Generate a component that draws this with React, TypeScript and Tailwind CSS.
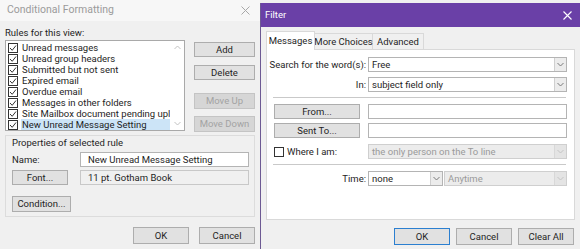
import React from "react";

const Check = ({ checked = true }: { checked?: boolean }) => (
  <span className="w-[10px] h-[10px] border border-[#333333] bg-white flex items-center justify-center shrink-0">
    {checked && (
      <svg width="8" height="8" viewBox="0 0 8 8">
        <path d="M1 4 L3.2 6.3 L7 1.5" fill="none" stroke="#333333" strokeWidth="1" />
      </svg>
    )}
  </span>
);

const Chev = ({ up = false, color = "#777777" }: { up?: boolean; color?: string }) => (
  <svg width="7" height="5" viewBox="0 0 7 5">
    <path d={up ? "M0.5 4 L3.5 1 L6.5 4" : "M0.5 1 L3.5 4 L6.5 1"} fill="none" stroke={color} strokeWidth="1" />
  </svg>
);

const Btn = ({ label, w, h = 15, disabled = false, focused = false }: { label: string; w: number; h?: number; disabled?: boolean; focused?: boolean }) => (
  <div
    className={
      "flex items-center justify-center border text-[9.5px] leading-none whitespace-nowrap shrink-0 " +
      (disabled
        ? "bg-[#d6d6d6] border-[#c4c4c4] text-[#a3a3a3]"
        : focused
        ? "bg-[#e1e1e1] border-[#2b7fd0] text-[#1e1e1e]"
        : "bg-[#e1e1e1] border-[#adadad] text-[#1e1e1e]")
    }
    style={{ width: w, height: h }}
  >
    {label}
  </div>
);

const Combo = ({ text, w, disabled = false }: { text: string; w: number; disabled?: boolean }) => (
  <div
    className={
      "h-[15px] flex items-stretch border shrink-0 " +
      (disabled ? "bg-[#ececec] border-[#cfcfcf] text-[#9a9a9a]" : "bg-white border-[#b4b4b4] text-[#1e1e1e]")
    }
    style={{ width: w }}
  >
    <div className="flex-1 flex items-center pl-[3px] text-[9.5px] leading-none overflow-hidden whitespace-nowrap">{text}</div>
    <div
      className={
        "w-[12px] flex items-center justify-center border-l " +
        (disabled ? "bg-[#e4e4e4] border-[#d8d8d8]" : "bg-[#ececec] border-[#cfcfcf]")
      }
    >
      <Chev color={disabled ? "#c4c4c4" : "#7a7a7a"} />
    </div>
  </div>
);

const Input = ({ text = "", w, gray = false }: { text?: string; w: number; gray?: boolean }) => (
  <div
    className={
      "h-[15px] flex items-center border pl-[7px] text-[9.5px] leading-none text-[#1e1e1e] whitespace-nowrap shrink-0 " +
      (gray ? "bg-[#f0f0f0] border-[#c8c8c8]" : "bg-white border-[#b4b4b4]")
    }
    style={{ width: w }}
  >
    {text}
  </div>
);

const rules = [
  "Unread messages",
  "Unread group headers",
  "Submitted but not sent",
  "Expired email",
  "Overdue email",
  "Messages in other folders",
  "Site Mailbox document pending upload",
  "New Unread Message Setting",
];

export default function App() {
  return (
    <div className="flex w-[580px] h-[249px] overflow-hidden bg-[#f0f0f0] text-[#1e1e1e] font-['Roboto','Noto_Sans',sans-serif]">
      {/* Conditional Formatting dialog */}
      <div className="w-[260px] h-full flex flex-col shrink-0 bg-[#f0f0f0]">
        <div className="h-[21px] flex items-center justify-between pl-[7px] pr-[10px] bg-[#f7f7f7]">
          <span className="text-[10.5px] leading-none text-[#9b9b9b]">Conditional Formatting</span>
          <svg width="9" height="9" viewBox="0 0 9 9">
            <path d="M0.5 0.5 L8.5 8.5 M8.5 0.5 L0.5 8.5" stroke="#a8a8a8" strokeWidth="1" />
          </svg>
        </div>
        <div className="mt-[6px] h-[12px] leading-[12px] pl-[5px] text-[9.5px]">Rules for this view:</div>
        <div className="flex mt-px">
          <div className="ml-[5px] w-[180px] h-[91px] bg-white border border-[#a9a9a9] flex">
            <div className="flex-1 flex flex-col pt-px overflow-hidden">
              {rules.map((r, i) => (
                <div key={r} className="h-[11px] flex items-center pl-[2px] shrink-0">
                  <Check />
                  <span
                    className={
                      "ml-[3px] h-[11px] flex items-center pl-px text-[9.5px] leading-none whitespace-nowrap overflow-hidden " +
                      (i === 7 ? "bg-[#cce4f7] w-[152px]" : "w-[152px]")
                    }
                  >
                    {r}
                  </span>
                </div>
              ))}
            </div>
            <div className="w-[14px] flex flex-col items-center justify-between py-[4px]">
              <Chev up color="#c2c2c2" />
              <Chev color="#c2c2c2" />
            </div>
          </div>
          <div className="ml-[9px] flex flex-col">
            <div className="mt-[2px]"><Btn label="Add" w={61} /></div>
            <div className="mt-[8px]"><Btn label="Delete" w={61} /></div>
            <div className="mt-[13px]"><Btn label="Move Up" w={61} h={16} disabled /></div>
            <div className="mt-[7px]"><Btn label="Move Down" w={61} h={16} disabled /></div>
          </div>
        </div>
        <div className="mt-[3px] ml-[5px] w-[250px] h-[82px] border border-[#dcdcdc] flex flex-col">
          <div className="mt-px h-[11px] leading-[11px] pl-[6px] text-[9.5px]">Properties of selected rule</div>
          <div className="mt-[4px] flex items-center">
            <span className="pl-[6px] w-[74px] text-[9.5px] leading-none">Name:</span>
            <Input text="New Unread Message Setting" w={169} />
          </div>
          <div className="mt-[3px] flex items-center">
            <div className="ml-[6px]"><Btn label="Font..." w={56} /></div>
            <div className="ml-[12px]"><Input text="11 pt. Gotham Book" w={169} gray /></div>
          </div>
          <div className="mt-[11px] ml-[6px]">
            <Btn label="Condition..." w={59} h={16} />
          </div>
        </div>
        <div className="mt-[10px] flex justify-end gap-[10px] pr-[5px]">
          <Btn label="OK" w={56} h={17} />
          <Btn label="Cancel" w={56} h={17} />
        </div>
      </div>

      {/* Filter dialog */}
      <div className="w-[320px] mt-[3px] h-[246px] flex flex-col border-l border-[#6d5a93] bg-[#f0f0f0] shrink-0">
        <div className="h-[24px] bg-[#6a40a7] flex items-center justify-between pl-[4px] pr-[8px]">
          <span className="text-[9.5px] leading-none text-white">Filter</span>
          <svg width="9" height="9" viewBox="0 0 9 9">
            <path d="M0.5 0.5 L8.5 8.5 M8.5 0.5 L0.5 8.5" stroke="#ffffff" strokeWidth="1.1" />
          </svg>
        </div>
        <div className="mt-[4px] pl-[5px] flex items-end h-[18px]">
          <div className="relative z-10 -mb-px w-[49px] h-[19px] bg-white border border-b-0 border-[#d9d9d9] flex items-center justify-center text-[9.5px] leading-none whitespace-nowrap">
            Messages
          </div>
          <div className="w-[58px] h-[16px] border border-l-0 border-b-0 border-[#d9d9d9] flex items-center justify-center text-[9.5px] leading-none whitespace-nowrap">
            More Choices
          </div>
          <div className="w-[51px] h-[16px] border border-l-0 border-b-0 border-[#d9d9d9] flex items-center justify-center text-[9.5px] leading-none whitespace-nowrap">
            Advanced
          </div>
        </div>
        <div className="ml-[5px] w-[309px] h-[171px] bg-white border border-[#d9d9d9] flex flex-col">
          <div className="mt-[7px] flex items-center">
            <span className="w-[99px] text-right text-[9.5px] leading-none whitespace-nowrap">Search for the word(s):</span>
            <div className="ml-[2px]"><Combo text="Free" w={199} /></div>
          </div>
          <div className="mt-[5px] flex items-center">
            <span className="w-[99px] text-right text-[9.5px] leading-none">In:</span>
            <div className="ml-[2px]"><Combo text="subject field only" w={199} /></div>
          </div>
          <div className="mt-[5px] ml-[6px] w-[293px] h-[2px] border-t border-[#c9c9c9] border-b border-b-white" />
          <div className="mt-[5px] flex items-center">
            <div className="ml-[7px]"><Btn label="From..." w={86} /></div>
            <div className="ml-[8px]"><Input w={199} /></div>
          </div>
          <div className="mt-[4px] flex items-center">
            <div className="ml-[7px]"><Btn label="Sent To..." w={86} /></div>
            <div className="ml-[8px]"><Input w={199} /></div>
          </div>
          <div className="mt-[6px] flex items-center">
            <div className="ml-[7px] w-[94px] flex items-center">
              <span className="w-[10px] h-[10px] border border-[#333333] bg-white" />
              <span className="ml-[3px] text-[9.5px] leading-none">Where I am:</span>
            </div>
            <Combo text="the only person on the To line" w={199} disabled />
          </div>
          <div className="mt-[5px] ml-[6px] w-[293px] h-[2px] border-t border-[#c9c9c9] border-b border-b-white" />
          <div className="mt-[5px] flex items-center">
            <span className="w-[99px] text-right text-[9.5px] leading-none">Time:</span>
            <div className="ml-[2px]"><Combo text="none" w={75} /></div>
            <div className="ml-px"><Combo text="Anytime" w={123} disabled /></div>
          </div>
        </div>
        <div className="mt-[8px] flex justify-end gap-[6px] pr-[6px]">
          <Btn label="OK" w={56} h={17} focused />
          <Btn label="Cancel" w={56} h={17} />
          <Btn label="Clear All" w={56} h={17} />
        </div>
      </div>
    </div>
  );
}
